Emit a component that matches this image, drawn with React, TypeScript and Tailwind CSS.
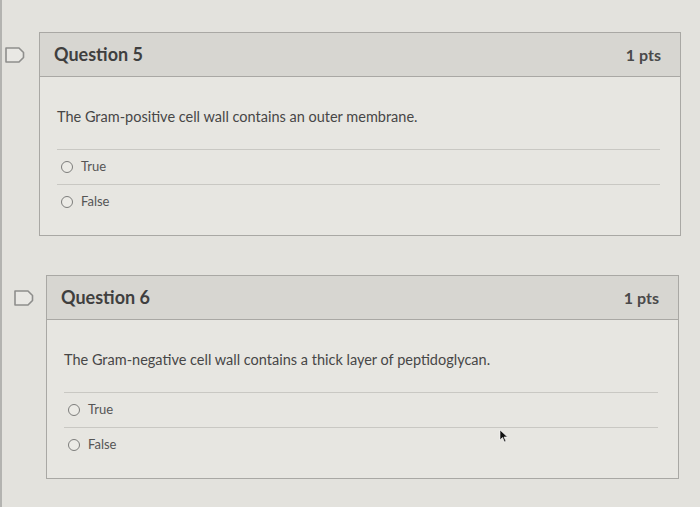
import React from "react";

type Question = {
  n: number;
  text: string;
  answers: string[];
  offset: string;
  iconGap: string;
  width: string;
};

const questions: Question[] = [
  {
    n: 5,
    text: "The Gram-positive cell wall contains an outer membrane.",
    answers: ["True", "False"],
    offset: "pl-[5px] pt-[32px]",
    iconGap: "gap-[14px]",
    width: "w-[642px]",
  },
  {
    n: 6,
    text: "The Gram-negative cell wall contains a thick layer of peptidoglycan.",
    answers: ["True", "False"],
    offset: "pl-[14px] pt-[39px]",
    iconGap: "gap-[12px]",
    width: "w-[633px]",
  },
];

function FlagIcon() {
  return (
    <svg width="20" height="16" viewBox="0 0 20 16" className="shrink-0">
      <path
        d="M1 1 H14 L18.5 5.5 V10.5 L14 15 H1 Z"
        fill="#e9e8e4"
        stroke="#8e8e8c"
        strokeWidth="1.6"
        strokeLinejoin="round"
      />
    </svg>
  );
}

function QuestionCard({ q }: { q: Question }) {
  return (
    <div className={`flex items-start ${q.offset} ${q.iconGap}`}>
      <div className="flex h-[46px] items-center">
        <FlagIcon />
      </div>
      <div className={`${q.width} border border-[#a9a8a4] bg-[#e7e6e1]`}>
        <div className="flex h-[44px] items-center justify-between border-b border-[#a9a8a4] bg-[#d7d6d1] pl-[14px] pr-[19px]">
          <span className="text-[18px] font-bold text-[#3f3f3f]">
            Question {q.n}
          </span>
          <span className="text-[16px] font-bold text-[#4a4a4a]">1 pts</span>
        </div>
        <div className="pb-[16px] pl-[17px] pr-[20px] pt-[29px]">
          <p className="mb-[21px] text-[14.5px] leading-[22px] text-[#474747]">
            {q.text}
          </p>
          {q.answers.map((a) => (
            <div
              key={a}
              className="flex h-[35px] items-center gap-[8px] border-t border-[#c9c8c3] pl-[4px]"
            >
              <span className="h-[12px] w-[12px] rounded-full border border-[#7d7d7b] bg-[#ecebe6]" />
              <span className="text-[13px] text-[#555]">{a}</span>
            </div>
          ))}
        </div>
      </div>
    </div>
  );
}

export default function App() {
  return (
    <div
      className="relative h-[507px] w-[700px] overflow-hidden bg-[#e3e2dd]"
      style={{ fontFamily: "Lato, 'Open Sans', sans-serif" }}
    >
      <div className="absolute left-0 top-0 h-full w-[2px] bg-[#b3b3b0]" />
      {questions.map((q) => (
        <QuestionCard key={q.n} q={q} />
      ))}
      <svg
        width="10"
        height="14"
        viewBox="0 0 10 14"
        className="absolute left-[499px] top-[429px]"
      >
        <path d="M1 1 L1 11 L3.5 8.5 L5.5 13 L7 12.3 L5 8 L8.5 8 Z" fill="#111" stroke="#fff" strokeWidth="0.6" />
      </svg>
    </div>
  );
}
